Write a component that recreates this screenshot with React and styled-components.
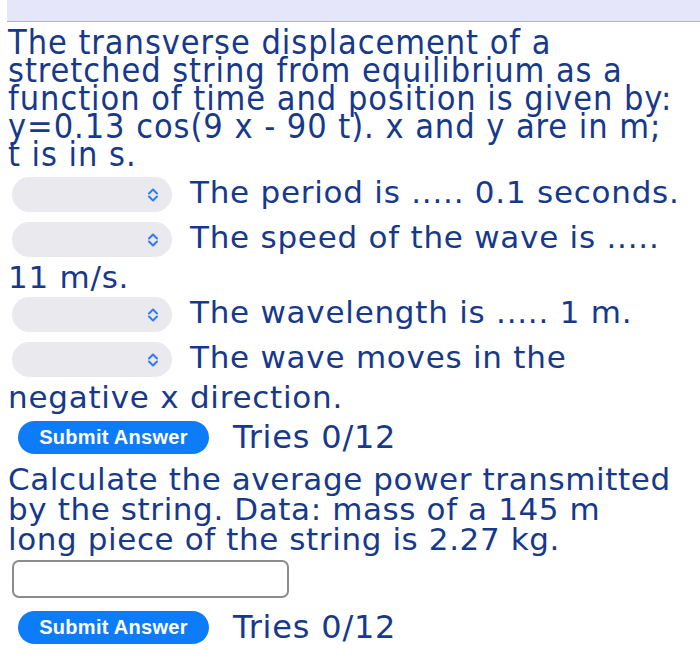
import React from "react";
import styled, { createGlobalStyle } from "styled-components";

const GlobalStyle = createGlobalStyle`
  body {
    margin: 0;
    background: #ffffff;
  }
`;

const TEXT = "#17398b";

function Chevrons() {
  return (
    <svg width="14" height="18" viewBox="0 0 14 18">
      <path
        d="M3 7.5 L7 3.5 L11 7.5 M3 10.5 L7 14.5 L11 10.5"
        fill="none"
        stroke="#2f7bf5"
        strokeWidth="2"
        strokeLinecap="round"
        strokeLinejoin="round"
      />
    </svg>
  );
}

function Choice({ children }) {
  return (
    <Item>
      <Select>
        <Chevrons />
      </Select>
      {children}
    </Item>
  );
}

function SubmitRow({ top }) {
  return (
    <Actions $top={top}>
      <SubmitButton>Submit Answer</SubmitButton>
      <Tries>Tries 0/12</Tries>
    </Actions>
  );
}

export default function App() {
  return (
    <>
      <GlobalStyle />
      <Page>
        <TopBar />
        <Question>
          The transverse displacement of a<br />
          stretched string from equilibrium as a<br />
          function of time and position is given by:<br />
          y=0.13 cos(9 x - 90 t). x and y are in m;<br />
          t is in s.
        </Question>
        <Choices>
          <Choice>The period is ..... 0.1 seconds.</Choice>
          <Choice>
            The speed of the wave is .....
            <br />
            11 m/s.
          </Choice>
          <Choice>The wavelength is ..... 1 m.</Choice>
          <Choice>
            The wave moves in the
            <br />
            negative x direction.
          </Choice>
        </Choices>
        <SubmitRow top={8} />
        <Prompt>
          Calculate the average power transmitted
          <br />
          by the string. Data: mass of a 145 m<br />
          long piece of the string is 2.27 kg.
        </Prompt>
        <AnswerInput type="text" />
        <SubmitRow top={12} />
      </Page>
    </>
  );
}

const Page = styled.div`
  width: 700px;
  padding: 0 0 0 8px;
  box-sizing: border-box;
  color: ${TEXT};
  font-family: "DejaVu Sans", Verdana, sans-serif;
`;

const TopBar = styled.div`
  height: 21px;
  margin-left: -1px;
  background: #e6e6fa;
  border-bottom: 1.5px solid #b4b4bf;
`;

const Question = styled.p`
  margin: 6px 0 0;
  font-family: "DejaVu Sans Condensed", "DejaVu Sans", sans-serif;
  font-size: 34px;
  line-height: 28px;
  letter-spacing: 0.95px;
  white-space: nowrap;
`;

const Choices = styled.div`
  margin-top: 4px;
`;

const Item = styled.div`
  font-size: 31px;
  line-height: 30px;
  letter-spacing: 0.75px;
  white-space: nowrap;
`;

const Select = styled.span`
  display: inline-flex;
  align-items: center;
  justify-content: flex-end;
  box-sizing: border-box;
  width: 160px;
  height: 35px;
  padding-right: 12px;
  margin: 5px 18px 5px 4px;
  vertical-align: middle;
  border-radius: 18px;
  background: #e9e9ee;
`;

const Actions = styled.div`
  display: flex;
  align-items: center;
  gap: 24px;
  margin: ${(p) => p.$top}px 0 0 10px;
`;

const SubmitButton = styled.button`
  width: 191px;
  height: 33px;
  border: none;
  border-radius: 17px;
  background: #0d7cf8;
  color: #ffffff;
  font-family: "Liberation Sans", Arial, sans-serif;
  font-weight: bold;
  font-size: 20px;
  letter-spacing: 0.3px;
  padding: 0;
`;

const Tries = styled.span`
  font-size: 32px;
  line-height: 34px;
  letter-spacing: 0.8px;
`;

const Prompt = styled.p`
  margin: 10px 0 0;
  font-size: 31px;
  line-height: 30px;
  letter-spacing: 0.6px;
  white-space: nowrap;
`;

const AnswerInput = styled.input`
  display: block;
  box-sizing: border-box;
  width: 277px;
  height: 38px;
  margin: 6px 0 0 4px;
  border: 2px solid #8c8c8c;
  border-radius: 7px;
  background: #ffffff;
  outline: none;
`;
